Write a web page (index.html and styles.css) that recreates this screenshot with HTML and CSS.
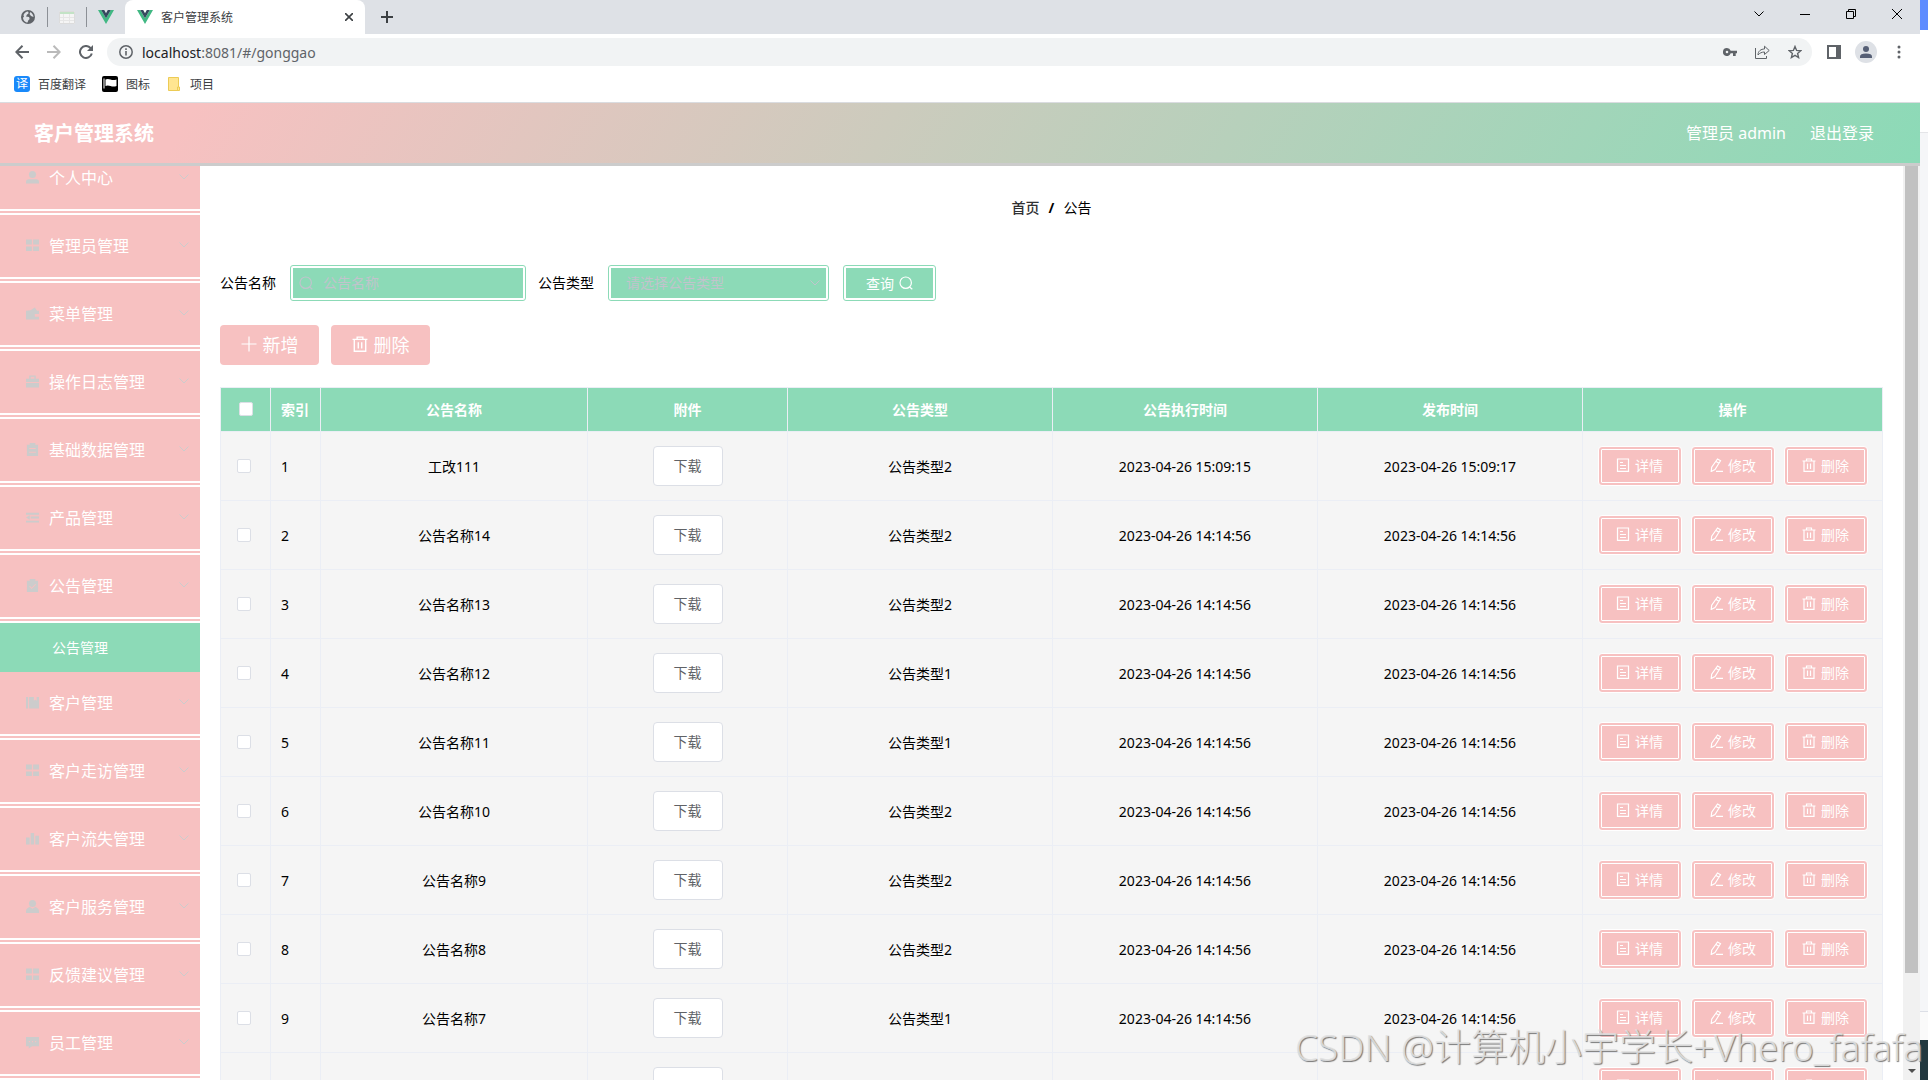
FILE: index.html
```
<!DOCTYPE html>
<html lang="zh-CN">
<head>
  <meta charset="UTF-8">
  <meta name="viewport" content="width=device-width, initial-scale=1.0">
  <title>客户管理系统</title>
  <link rel="stylesheet" href="styles.css">
</head>
<body>
  <!-- icons -->
  <svg class="sprite" xmlns="http://www.w3.org/2000/svg">
    <symbol id="i-vue" viewBox="0 0 16 14"><path fill="#41b883" d="M0 0h3.2L8 8.3 12.800 0H16L8 14z"/><path fill="#35495e" d="M3.200 0H6.200L8 3.200 9.800 0h3L8 8.300z"/></symbol>
    <symbol id="i-user" viewBox="0 0 14 14"><circle cx="7" cy="3.800" r="3.800"/><path d="M0 13.500V12q0-3 3-3h8q3 0 3 3v1.500z"/></symbol>
    <symbol id="i-grid" viewBox="0 0 14 14"><path d="M0 .5h6.300v5.500H0zM7.700.5H14v5.500H7.700zM0 8h6.300v5H0zM7.700 8H14v5H7.700z"/></symbol>
    <symbol id="i-wallet" viewBox="0 0 14 14"><path d="M0 4l5-.5L9.500.5 12 4h2v3.500H9.500v3H14V13.500H0z"/></symbol>
    <symbol id="i-case" viewBox="0 0 14 14"><path d="M3.500 4V.5h7V4H14v3.500H0V4zM5 4h4V2H5zM0 8.500h14v5H0z" fill-rule="evenodd"/></symbol>
    <symbol id="i-order" viewBox="0 0 14 14"><path d="M1 2h3V0h6v2h3v12H1zM3.500 5.500v1h7v-1zM3.500 9.500v1h7v-1z" fill-rule="evenodd"/></symbol>
    <symbol id="i-fold" viewBox="0 0 14 14"><path d="M0 2h14v2H0zM5 6h9v2H5zM0 10.500h14v2H0zM0 7l4-2.500v5z"/></symbol>
    <symbol id="i-claim" viewBox="0 0 14 14"><path d="M1 2h3V0h6v2h3v12H1zM3.500 8L6 10.800 10.800 6l-.7-.7L6 9.400 4.200 7.300z" fill-rule="evenodd"/></symbol>
    <symbol id="i-book" viewBox="0 0 14 14"><path d="M0 1h2.300v12.500H0zM3.300 1H8.500v4l1.500-1 1.500 1V1H14v12.500H3.300z"/></symbol>
    <symbol id="i-data" viewBox="0 0 14 14"><path d="M0 6h4v7.500H0zM5 1h3.700v12.500H5zM10 4h4v9.500h-4z"/></symbol>
    <symbol id="i-custom" viewBox="0 0 14 14"><circle cx="7" cy="3.800" r="3.800"/><path d="M0 14v-2q0-3 4-4.500l3 2 3-2q4 1.500 4 4.500v2z"/></symbol>
    <symbol id="i-comment" viewBox="0 0 14 14"><path d="M0 1h14v10H6.500l-3.500 2.500V11H0zM3 5.500v1.200h1.200V5.500zM6.400 5.500v1.200h1.200V5.500zM9.800 5.500v1.200H11V5.500z" fill-rule="evenodd"/></symbol>
    <symbol id="i-down" viewBox="0 0 10 6"><path fill="none" stroke="currentColor" d="M.5.5L5 5 9.500.5"/></symbol>
    <symbol id="i-search" viewBox="0 0 14 14"><g fill="none" stroke="currentColor" stroke-width="1.200"><circle cx="6.700" cy="6.700" r="5.700"/><path d="M10.500 11l2.800 2.300"/></g></symbol>
    <symbol id="i-plus" viewBox="0 0 16 16"><path fill="none" stroke="currentColor" stroke-width="1.200" d="M8 .5v15M.5 8h15"/></symbol>
    <symbol id="i-delete" viewBox="0 0 14 14"><path fill="none" stroke="currentColor" stroke-width="1.200" d="M.5 3h13M4.500 3V1h5v2M2 3v10.300h10V3M5.500 5.500v5.500M8.500 5.500v5.500"/></symbol>
    <symbol id="i-doc" viewBox="0 0 14 14"><path fill="none" stroke="currentColor" stroke-width="1.200" d="M1.500 1h11v12.300h-11zM4 4.500h3M4 7.500h6M4 10.500h6"/></symbol>
    <symbol id="i-edit" viewBox="0 0 14 14"><path fill="none" stroke="currentColor" stroke-width="1.200" d="M8.500 1l3 1.800L6 11.500l-3.800 2 .5-4.300zM7 3.500l3 1.800M7 13.300h7"/></symbol>
  </svg>

  <div class="window">
    <div class="tab-bar">
      <div class="pinned"><svg width="14" height="14" viewBox="0 0 14 14"><circle cx="7" cy="7" r="7" fill="#5f6368"/><path fill="#dee1e6" d="M7 1.500C8 3 7.500 4 6 4.500L5 6.500 8 7s1.500 2.500-.5 3l-1 2.500C4 12.500 2 10 2 7.500L3 7 2.500 5C3.500 3 5 1.500 7 1.500zM9.500 2c1.500 1 3 3 3 5L10 6 8.500 4z"/></svg></div>
      <div class="pinned"><svg width="16" height="13" viewBox="0 0 16 13"><path fill="#f5f5f5" d="M0 0h16v13H0z"/><path fill="#c3e3c6" d="M0 1h16v2H0z"/><path stroke="#e6e6e6" fill="none" d="M0 6.500h16M0 9.500h16M4.500 3v10M10.500 3v10"/><path stroke="#dcdcdc" fill="none" d="M.5.5h15v12H.5z"/></svg></div>
      <div class="pinned"><svg width="16" height="14"><use href="#i-vue"/></svg></div>
      <div class="tab">
        <svg width="16" height="14"><use href="#i-vue"/></svg>
        <span class="tab-title">客户管理系统</span>
        <button class="plain" aria-label="关闭"><svg width="8" height="8" viewBox="0 0 8 8"><path stroke="#3c4043" stroke-width="1.600" d="M0 0l8 8M8 0L0 8"/></svg></button>
      </div>
      <button class="plain new-tab" aria-label="新标签页"><svg width="12" height="12" viewBox="0 0 12 12"><path stroke="#3c4043" stroke-width="2" d="M6 0v12M0 6h12"/></svg></button>
      <div class="win-btns">
        <svg width="10" height="6"><use href="#i-down"/></svg>
        <svg width="10" height="10" viewBox="0 0 10 10"><path stroke="#000" d="M0 5.500h10"/></svg>
        <svg width="10" height="10" viewBox="0 0 10 10"><path stroke="#000" fill="none" d="M.5 2.500h7v7h-7zM2.500 2.500v-2h7v7h-2"/></svg>
        <svg width="10" height="10" viewBox="0 0 10 10"><path stroke="#000" d="M0 0l10 10M10 0L0 10"/></svg>
      </div>
    </div>

    <div class="toolbar">
      <svg width="14" height="14" viewBox="0 0 14 14"><path fill="none" stroke="#5f6368" stroke-width="2" d="M14 7H1.500M7.500.8L1.300 7l6.200 6.200"/></svg>
      <svg width="14" height="14" viewBox="0 0 14 14"><path fill="none" stroke="#bababa" stroke-width="2" d="M0 7h12.500M6.500.8L12.700 7l-6.200 6.200"/></svg>
      <svg width="14" height="14" viewBox="0 0 14 14"><path fill="none" stroke="#5f6368" stroke-width="2" d="M12.800 8.500A6 6 0 1 1 11.500 3L13 4.500"/><path fill="#5f6368" d="M14 0v6H8z"/></svg>
      <div class="address">
        <svg width="14" height="14" viewBox="0 0 14 14"><circle cx="7" cy="7" r="6.200" fill="none" stroke="#5f6368" stroke-width="1.500"/><path fill="#5f6368" d="M6.200 6h1.600v4.500H6.200zM6.200 3.300h1.600v1.600H6.200z"/></svg>
        <span class="url"><b>localhost</b>:8081/#/gonggao</span>
        <svg width="14" height="8" viewBox="0 0 14 8"><path fill="#5f6368" fill-rule="evenodd" d="M4 0a4 4 0 0 1 3.700 2.700H14v2.600h-1.300V8H10V5.300H7.700A4 4 0 1 1 4 0zM4 2.700a1.300 1.300 0 1 0 0 2.600 1.300 1.300 0 0 0 0-2.600z"/></svg>
        <svg width="15" height="14" viewBox="0 0 15 14"><path fill="none" stroke="#5f6368" d="M.5 3v10.500h11V11M3 10c0-4 3-6 6.500-6V1.200L14.200 5.500 9.500 9.500V7C7 7 4.500 8 3 10z"/></svg>
        <svg width="14" height="14" viewBox="0 0 14 14"><path fill="none" stroke="#5f6368" stroke-width="1.400" d="M7 1.500l1.600 3.900 4.200.3-3.200 2.700 1 4.100L7 10.300l-3.600 2.200 1-4.100L1.200 5.700l4.200-.3z"/></svg>
      </div>
      <div class="tools">
        <svg width="14" height="14" viewBox="0 0 14 14"><path fill="#5f6368" fill-rule="evenodd" d="M0 0h14v14H0zM2 2v10h7V2z"/></svg>
        <svg width="22" height="22" viewBox="0 0 22 22"><circle cx="11" cy="11" r="11" fill="#dee1e6"/><circle cx="11" cy="8" r="3" fill="#565f75"/><path fill="#565f75" d="M5 17v-1.500q0-3 6-3t6 3V17z"/></svg>
        <svg width="4" height="14" viewBox="0 0 4 14"><g fill="#5f6368"><circle cx="2" cy="2" r="1.500"/><circle cx="2" cy="7" r="1.500"/><circle cx="2" cy="12" r="1.500"/></g></svg>
      </div>
    </div>

    <div class="bookmarks">
      <a href="#"><span class="fanyi">译</span>百度翻译</a>
      <a href="#"><svg width="16" height="16" viewBox="0 0 16 16"><rect width="16" height="16" rx="2"/><path fill="#fff" d="M1.500 2.500h1v10h-1zM3.500 3.500q2-1 5 0t6 0v6.500q-3 1-6 0t-5 0z"/></svg>图标</a>
      <a href="#"><svg class="folder" width="12" height="14" viewBox="0 0 12 14"><path fill="#ffe591" stroke="#eccb55" d="M.5.500h10v13H.5z"/><path fill="#ffe591" stroke="#eccb55" d="M9.500 10h2v3.500h-2z"/></svg>项目</a>
    </div>

    <header class="header">
      <h1>客户管理系统</h1>
      <span>管理员 admin</span>
      <a href="#">退出登录</a>
    </header>

    <div class="container">
      <nav class="aside">
        <ul class="menu" id="menu"></ul>
      </nav>

      <main class="main">
        <div class="breadcrumb"><a href="#">首页</a><b>/</b><span>公告</span></div>

        <form class="search">
          <label for="name">公告名称</label>
          <div class="field name">
            <svg width="14" height="14"><use href="#i-search"/></svg>
            <input type="text" id="name" placeholder="公告名称">
          </div>
          <label for="type">公告类型</label>
          <div class="field type">
            <select id="type">
              <option>请选择公告类型</option>
              <option>公告类型1</option>
              <option>公告类型2</option>
            </select>
            <svg width="10" height="6"><use href="#i-down"/></svg>
          </div>
          <button type="button" class="query">查询<svg width="14" height="14"><use href="#i-search"/></svg></button>
        </form>

        <div class="actions">
          <button class="btn"><svg width="16" height="16"><use href="#i-plus"/></svg>新增</button>
          <button class="btn"><svg width="16" height="16"><use href="#i-delete"/></svg>删除</button>
        </div>

        <table class="table">
          <colgroup>
            <col class="c-small"><col class="c-small"><col class="c-name"><col class="c-file"><col><col><col><col class="c-op">
          </colgroup>
          <thead>
            <tr>
              <th class="check"><input type="checkbox" aria-label="全选"></th>
              <th class="index">索引</th>
              <th>公告名称</th>
              <th>附件</th>
              <th>公告类型</th>
              <th>公告执行时间</th>
              <th>发布时间</th>
              <th>操作</th>
            </tr>
          </thead>
          <tbody id="rows"></tbody>
        </table>
      </main>

      <div class="scrollbar">
        <div class="thumb"></div>
        <svg width="8" height="4" viewBox="0 0 8 4"><path fill="#505050" d="M0 0h8L4 4z"/></svg>
      </div>
    </div>
  </div>

  <div class="behind">
    <div class="behind-title"></div>
    <div class="behind-top"></div>
    <div class="behind-body"></div>
    <div class="behind-row"></div>
    <div class="behind-dark"></div>
  </div>

  <div class="watermark">CSDN @计算机小宇学长+Vhero_fafafa</div>

  <script src="script.js"></script>
</body>
</html>
```
FILE: styles.css
```
* {
  box-sizing: border-box;
}

body {
  margin: 0;
  height: 100vh;
  display: flex;
  overflow: hidden;
  background: #fff;
  color: #000;
  font-family: "Noto Sans", "Noto Sans CJK SC", sans-serif;
  font-size: 14px;
}

a {
  color: inherit;
  text-decoration: none;
}

button, input, select {
  font: inherit;
  margin: 0;
}

svg {
  flex: none;
  display: block;
}

.sprite {
  position: absolute;
  width: 0;
  height: 0;
}

.window {
  flex: 1;
  min-width: 0;
  display: flex;
  flex-direction: column;
}

/* browser */
.tab-bar {
  display: flex;
  align-items: center;
  flex: none;
  height: 34px;
  padding-left: 17px;
  background: #dee1e6;
}

.pinned {
  display: flex;
  align-items: center;
  justify-content: center;
  width: 39px;
  height: 20px;
  border-right: 1px solid #8c9096;
}

.pinned:first-child {
  width: 31px;
  padding-right: 12px;
  justify-content: flex-end;
}

.pinned:nth-child(3) {
  width: 38px;
  border: 0;
}

.tab {
  display: flex;
  align-items: center;
  width: 240px;
  height: 34px;
  padding: 0 8px 0 12px;
  border-radius: 8px 8px 0 0;
  background: #fff;
  font-size: 12px;
  color: #3c4043;
}

.tab-title {
  flex: 1;
  margin-left: 8px;
}

.plain {
  padding: 4px;
  border: 0;
  background: none;
}

.new-tab {
  margin-left: 12px;
}

.win-btns {
  display: flex;
  align-items: center;
  gap: 36px;
  margin: 0 18px 6px auto;
}

.toolbar {
  display: flex;
  align-items: center;
  flex: none;
  gap: 18px;
  height: 36px;
  padding: 0 19px 0 15px;
}

.address {
  flex: 1;
  display: flex;
  align-items: center;
  gap: 18px;
  height: 28px;
  margin-left: -4px;
  padding: 0 10px 0 12px;
  border-radius: 14px;
  background: #f1f3f4;
}

.url {
  flex: 1;
  margin-left: -9px;
  font-size: 14px;
  color: #5f6368;
}

.url b {
  font-weight: normal;
  color: #202124;
}

.tools {
  display: flex;
  align-items: center;
  gap: 14px;
  margin-left: -3px;
}

.tools svg:last-child {
  margin-left: 6px;
}

.bookmarks {
  display: flex;
  align-items: center;
  flex: none;
  gap: 16px;
  height: 33px;
  padding: 0 14px 4px;
  border-bottom: 1px solid #dadce0;
  font-size: 12px;
  color: #3c4043;
}

.bookmarks a {
  display: flex;
  align-items: center;
  gap: 8px;
}

.fanyi {
  width: 16px;
  height: 16px;
  border-radius: 3px;
  background: #1989fa;
  color: #fff;
  line-height: 16px;
  text-align: center;
}

.folder {
  margin: 0 2px;
}

/* header */
.header {
  display: flex;
  align-items: center;
  flex: none;
  gap: 24px;
  height: 63px;
  padding: 0 46px 2px 34px;
  border-bottom: 3px solid #ccc;
  background: linear-gradient(120deg, #f7c1c1 10%, #8cdab7 100%);
  color: #fff;
  font-size: 16px;
}

.header h1 {
  margin: 0 auto 0 0;
  font-size: 20px;
}

.container {
  flex: 1;
  display: flex;
  min-height: 0;
}

/* menu */
.aside {
  flex: none;
  width: 200px;
  overflow: hidden;
  background: #f7c1c1;
}

.menu {
  margin: -19px 0 0;
  padding: 0;
  list-style: none;
}

.menu-item {
  display: flex;
  align-items: center;
  height: 68px;
  padding: 0 11px 2px 26px;
  border-bottom: 6px double #fff;
  color: #fff;
  font-size: 16px;
}

.menu-item svg {
  fill: #ccc;
  color: #ccc;
}

.menu-item span {
  flex: 1;
  margin-left: 10px;
}

.sub-item {
  display: block;
  height: 49px;
  padding-left: 52px;
  background: #8cdab7;
  color: #fff;
  line-height: 49px;
}

/* content */
.main {
  flex: 1;
  min-width: 0;
  overflow: hidden;
  padding: 32px 20px 0;
}

.breadcrumb {
  display: flex;
  justify-content: center;
  gap: 9px;
  line-height: 20px;
}

.breadcrumb a {
  color: #303133;
  font-weight: 500;
}

.search {
  display: flex;
  align-items: center;
  margin-top: 47px;
}

.search label {
  padding-bottom: 2px;
}

.field {
  display: flex;
  align-items: center;
  height: 36px;
  margin: 0 12px 0 14px;
  border: 4px double #8cdab7;
  border-radius: 3px;
  background: #8cdab7;
  background-clip: padding-box;
  color: #c0c4cc;
}

.name {
  width: 236px;
  padding-left: 5px;
}

.type {
  width: 221px;
  padding-right: 5px;
}

.field input, .field select {
  flex: 1;
  min-width: 0;
  height: 28px;
  padding: 0 10px 2px;
  border: 0;
  outline: 0;
  background: none;
  color: #c0c4cc;
  appearance: none;
}

.field select {
  padding-left: 14px;
}

.field input::placeholder {
  color: #c0c4cc;
}

.query {
  display: flex;
  align-items: center;
  justify-content: center;
  gap: 5px;
  width: 93px;
  height: 36px;
  margin-left: 2px;
  padding: 0;
  border: 4px double #8cdab7;
  border-radius: 3px;
  background: #8cdab7;
  background-clip: padding-box;
  color: #fff;
}

.actions {
  display: flex;
  gap: 12px;
  margin: 24px 0 22px;
}

.btn {
  display: flex;
  align-items: center;
  justify-content: center;
  gap: 6px;
  width: 99px;
  height: 40px;
  padding: 0 0 2px;
  border: 0;
  border-radius: 4px;
  background: #f7c1c1;
  color: #fff;
  font-size: 18px;
}

.table {
  width: 100%;
  table-layout: fixed;
  border-collapse: collapse;
  text-align: center;
}

.c-small {
  width: 50px;
}

.c-name {
  width: 267px;
}

.c-file {
  width: 200px;
}

.c-op {
  width: 300px;
}

.table th, .table td {
  padding: 0;
  border: 1px solid #ebeef5;
}

.table th {
  height: 44px;
  padding-bottom: 2px;
  background: #8cdab7;
  color: #fff;
}

.table td {
  height: 69px;
  background: #f5f5f5;
}

.table .index {
  padding-left: 10px;
  text-align: left;
}

.table td.check {
  padding-right: 4px;
}

.check input {
  display: block;
  width: 14px;
  height: 14px;
  margin: 0 auto;
  border: 1px solid #dcdfe6;
  border-radius: 2px;
  background: #fff;
  appearance: none;
}

.download {
  width: 70px;
  height: 40px;
  padding: 0 0 2px;
  border: 1px solid #dcdfe6;
  border-radius: 4px;
  background: #fff;
  color: #606266;
}

.ops {
  display: flex;
  justify-content: center;
  gap: 9px;
}

.op {
  display: flex;
  align-items: center;
  justify-content: center;
  gap: 5px;
  width: 84px;
  height: 40px;
  padding: 0 0 2px;
  border: 4px double #fff;
  border-radius: 4px;
  background: #f7c1c1;
  color: #fff;
}

.scrollbar {
  display: flex;
  flex-direction: column;
  align-items: center;
  justify-content: space-between;
  flex: none;
  width: 17px;
  padding-bottom: 7px;
  background: #f1f1f1;
}

.thumb {
  width: 13px;
  height: 89%;
  background: #c1c1c1;
}

/* window behind */
.behind {
  display: flex;
  flex-direction: column;
  flex: none;
  width: 8px;
}

.behind-title {
  height: 30px;
  background: #5e8cff;
}

.behind-top {
  height: 103px;
  border-bottom: 1px solid #e4e5e8;
}

.behind-body {
  flex: 1;
  background: #f5f6f8;
}

.behind-row {
  height: 29px;
  border-top: 1px solid #dcdfe6;
  background: #fafafa;
}

.behind-dark {
  height: 40px;
  background: #22383f;
}

.watermark {
  position: absolute;
  right: 5px;
  bottom: 6px;
  color: rgba(225, 225, 225, .9);
  font-size: 37px;
  font-weight: 300;
  line-height: 54px;
  text-shadow: 1px 1px 1px #777;
  white-space: nowrap;
  pointer-events: none;
}
```
FILE: script.js
```
const menu = [
  ['user', '个人中心'],
  ['grid', '管理员管理'],
  ['wallet', '菜单管理'],
  ['case', '操作日志管理'],
  ['order', '基础数据管理'],
  ['fold', '产品管理'],
  ['claim', '公告管理', '公告管理'],
  ['book', '客户管理'],
  ['grid', '客户走访管理'],
  ['data', '客户流失管理'],
  ['custom', '客户服务管理'],
  ['grid', '反馈建议管理'],
  ['comment', '员工管理']
];

const rows = [
  ['工改111', '公告类型2', '2023-04-26 15:09:15', '2023-04-26 15:09:17'],
  ['公告名称14', '公告类型2', '2023-04-26 14:14:56', '2023-04-26 14:14:56'],
  ['公告名称13', '公告类型2', '2023-04-26 14:14:56', '2023-04-26 14:14:56'],
  ['公告名称12', '公告类型1', '2023-04-26 14:14:56', '2023-04-26 14:14:56'],
  ['公告名称11', '公告类型1', '2023-04-26 14:14:56', '2023-04-26 14:14:56'],
  ['公告名称10', '公告类型2', '2023-04-26 14:14:56', '2023-04-26 14:14:56'],
  ['公告名称9', '公告类型2', '2023-04-26 14:14:56', '2023-04-26 14:14:56'],
  ['公告名称8', '公告类型2', '2023-04-26 14:14:56', '2023-04-26 14:14:56'],
  ['公告名称7', '公告类型1', '2023-04-26 14:14:56', '2023-04-26 14:14:56'],
  ['公告名称6', '公告类型1', '2023-04-26 14:14:56', '2023-04-26 14:14:56']
];

function icon(name, w, h) {
  return `<svg width="${w}" height="${h}"><use href="#i-${name}"/></svg>`;
}

function op(name, text) {
  return `<button class="op">${icon(name, 14, 14)}${text}</button>`;
}

document.getElementById('menu').innerHTML = menu.map(([name, text, sub]) => `
  <li>
    <a class="menu-item" href="#">${icon(name, 13, 13)}<span>${text}</span>${icon('down', 10, 6)}</a>
    ${sub ? `<a class="sub-item" href="#">${sub}</a>` : ''}
  </li>`).join('');

document.getElementById('rows').innerHTML = rows.map((row, i) => `
  <tr>
    <td class="check"><input type="checkbox" aria-label="选择第${i + 1}行"></td>
    <td class="index">${i + 1}</td>
    <td>${row[0]}</td>
    <td><button class="download">下载</button></td>
    <td>${row[1]}</td>
    <td>${row[2]}</td>
    <td>${row[3]}</td>
    <td><div class="ops">${op('doc', '详情')}${op('edit', '修改')}${op('delete', '删除')}</div></td>
  </tr>`).join('');
```
